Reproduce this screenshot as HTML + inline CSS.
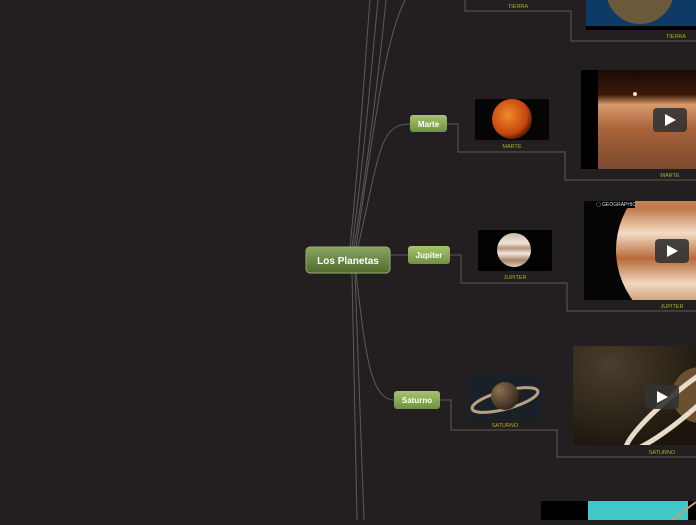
<!DOCTYPE html>
<html><head><style>
body{margin:0;width:696px;height:520px;overflow:hidden;background:#231f20;font-family:"Liberation Sans","DejaVu Sans",sans-serif;}
</style></head><body>
<svg width="696" height="520" viewBox="0 0 696 520" xmlns="http://www.w3.org/2000/svg">
<defs>
<linearGradient id="gc" x1="0" y1="0" x2="0" y2="1"><stop offset="0" stop-color="#8aa460"/><stop offset="1" stop-color="#4f6a2c"/></linearGradient>
<linearGradient id="gn" x1="0" y1="0" x2="0" y2="1"><stop offset="0" stop-color="#a7c46f"/><stop offset="1" stop-color="#6f9140"/></linearGradient>
<radialGradient id="mars" cx="0.4" cy="0.4" r="0.6"><stop offset="0" stop-color="#f08a2a"/><stop offset="0.8" stop-color="#c4450e"/><stop offset="1" stop-color="#6a1f05"/></radialGradient>
<linearGradient id="jup" x1="0" y1="0" x2="0" y2="1"><stop offset="0" stop-color="#c8b8a6"/><stop offset="0.3" stop-color="#eee6dc"/><stop offset="0.45" stop-color="#b89478"/><stop offset="0.6" stop-color="#f0e8e0"/><stop offset="0.8" stop-color="#a88468"/><stop offset="1" stop-color="#d8ccc0"/></linearGradient>
<linearGradient id="jupb" x1="0" y1="0" x2="0" y2="1"><stop offset="0" stop-color="#e8c8a8"/><stop offset="0.25" stop-color="#c07848"/><stop offset="0.4" stop-color="#f2dcc4"/><stop offset="0.55" stop-color="#b86a3a"/><stop offset="0.7" stop-color="#f0d8c0"/><stop offset="0.85" stop-color="#c88860"/><stop offset="1" stop-color="#e8d0b8"/></linearGradient>
<linearGradient id="marsb" x1="0" y1="0" x2="0" y2="1"><stop offset="0" stop-color="#1a0a04"/><stop offset="0.25" stop-color="#3a1a0a"/><stop offset="0.35" stop-color="#d89a6a"/><stop offset="0.6" stop-color="#a8623a"/><stop offset="1" stop-color="#7a4a2e"/></linearGradient>
<radialGradient id="sat" cx="0.3" cy="0.3" r="0.8"><stop offset="0" stop-color="#8a7050"/><stop offset="1" stop-color="#2e2418"/></radialGradient>
<radialGradient id="satbg" cx="0.3" cy="0.2" r="0.9"><stop offset="0" stop-color="#4a3e2c"/><stop offset="1" stop-color="#1a140c"/></radialGradient>
<clipPath id="cT"><rect x="586" y="0" width="110" height="30"/></clipPath>
<clipPath id="cM"><rect x="581" y="70" width="115" height="99"/></clipPath>
<clipPath id="cJ"><rect x="584" y="201" width="112" height="99"/></clipPath>
<clipPath id="cS"><rect x="573" y="346" width="123" height="99"/></clipPath>
<clipPath id="cU"><rect x="541" y="501" width="155" height="19"/></clipPath>
</defs>
<g fill="none" stroke="#5e5a5a" stroke-width="1">
<path d="M350 247 C360 150 365 60 370 0"/>
<path d="M352 247 C365 150 372 60 378 0"/>
<path d="M354 247 C370 150 380 60 386 0"/>
<path d="M356 247 C375 120 385 40 405 0"/>
<path d="M358 247 C380 150 380 124 410 124"/>
<path d="M390 255 L408 255"/>
<path d="M356 273 C365 350 370 400 394 400"/>
<path d="M352 273 C355 400 356 480 357 520"/>
<path d="M355 273 C360 400 362 480 364 520"/>
<path d="M465 0 L465 11 L571 11 L571 41 L696 41"/>
<path d="M447 124 L458 124 L458 152 L565 152 L565 180 L696 180"/>
<path d="M450 255 L461 255 L461 283 L567 283 L567 311 L696 311"/>
<path d="M440 400 L451 400 L451 430 L557 430 L557 457 L696 457"/>
</g>
<rect x="306" y="247" width="84" height="26" rx="4" fill="url(#gc)" stroke="#9ab070" stroke-width="1"/>
<text x="348" y="264" font-size="10" font-weight="bold" fill="#fff" text-anchor="middle">Los Planetas</text>
<rect x="410" y="115" width="37" height="17" rx="3" fill="url(#gn)"/>
<text x="428.5" y="127" font-size="8" font-weight="bold" fill="#fff" text-anchor="middle">Marte</text>
<rect x="408" y="246" width="42" height="18" rx="3" fill="url(#gn)"/>
<text x="429" y="258" font-size="8" font-weight="bold" fill="#fff" text-anchor="middle">Jupiter</text>
<rect x="394" y="391" width="46" height="18" rx="3" fill="url(#gn)"/>
<text x="417" y="403" font-size="8" font-weight="bold" fill="#fff" text-anchor="middle">Saturno</text>
<!-- tierra -->
<rect x="481" y="-3" width="74" height="3" fill="#000"/>
<text x="518" y="8" font-size="5.5" fill="#a8b020" text-anchor="middle">TIERRA</text>
<g clip-path="url(#cT)">
<rect x="586" y="0" width="110" height="30" fill="#0e3a66"/>
<circle cx="640" cy="-10" r="34" fill="#6a5a3a"/>
<rect x="586" y="26" width="110" height="4" fill="#000"/>
</g>
<text x="676" y="38" font-size="5.5" fill="#a8b020" text-anchor="middle">TIERRA</text>
<!-- marte -->
<rect x="475" y="99" width="74" height="41" rx="2" fill="#050505"/>
<circle cx="512" cy="119" r="20" fill="url(#mars)"/>
<text x="512" y="148" font-size="5.5" fill="#a8b020" text-anchor="middle">MARTE</text>
<g clip-path="url(#cM)">
<rect x="581" y="70" width="115" height="99" fill="#000"/>
<rect x="598" y="70" width="98" height="99" fill="url(#marsb)"/>
<circle cx="635" cy="94" r="2" fill="#ffe0b0"/>
</g>
<rect x="653" y="108" width="34" height="24" rx="4" fill="#333" opacity="0.9"/>
<path d="M665 114 L676 120 L665 126 Z" fill="#fff"/>
<text x="670" y="177" font-size="5.5" fill="#a8b020" text-anchor="middle">MARTE</text>
<!-- jupiter -->
<rect x="478" y="230" width="74" height="41" rx="2" fill="#020202"/>
<circle cx="514" cy="250" r="17" fill="url(#jup)"/>
<text x="515" y="279" font-size="5.5" fill="#a8b020" text-anchor="middle">JUPITER</text>
<g clip-path="url(#cJ)">
<rect x="584" y="201" width="112" height="99" fill="#050505"/>
<circle cx="700" cy="250" r="84" fill="url(#jupb)"/>
<rect x="595" y="201" width="40" height="7" fill="#000"/>
<text x="596" y="206" font-size="5" fill="#ddd">▢ GEOGRAPHIC</text>
</g>
<rect x="655" y="239" width="34" height="24" rx="4" fill="#333" opacity="0.9"/>
<path d="M667 245 L678 251 L667 257 Z" fill="#fff"/>
<text x="672" y="308" font-size="5.5" fill="#a8b020" text-anchor="middle">JUPITER</text>
<!-- saturno -->
<rect x="468" y="374" width="74" height="45" rx="2" fill="#1a2028"/>
<ellipse cx="505" cy="400" rx="34" ry="9" fill="none" stroke="#b8a080" stroke-width="3" transform="rotate(-15 505 400)"/>
<circle cx="505" cy="396" r="14" fill="url(#sat)"/>
<text x="505" y="427" font-size="5.5" fill="#a8b020" text-anchor="middle">SATURNO</text>
<g clip-path="url(#cS)">
<rect x="573" y="346" width="123" height="99" fill="url(#satbg)"/>
<circle cx="700" cy="395" r="28" fill="#6a5030"/>
<ellipse cx="680" cy="405" rx="70" ry="12" fill="none" stroke="#e8dcc8" stroke-width="5" transform="rotate(-40 680 405)"/>
</g>
<rect x="645" y="385" width="34" height="24" rx="4" fill="#333" opacity="0.9"/>
<path d="M657 391 L668 397 L657 403 Z" fill="#fff"/>
<text x="662" y="454" font-size="5.5" fill="#a8b020" text-anchor="middle">SATURNO</text>
<!-- urano -->
<g clip-path="url(#cU)">
<rect x="541" y="501" width="155" height="19" fill="#000"/>
<rect x="588" y="501" width="100" height="19" fill="#40c8c8"/>
<path d="M672 520 L696 502" stroke="#c8a070" stroke-width="2"/>
</g>
</svg>
</body></html>
